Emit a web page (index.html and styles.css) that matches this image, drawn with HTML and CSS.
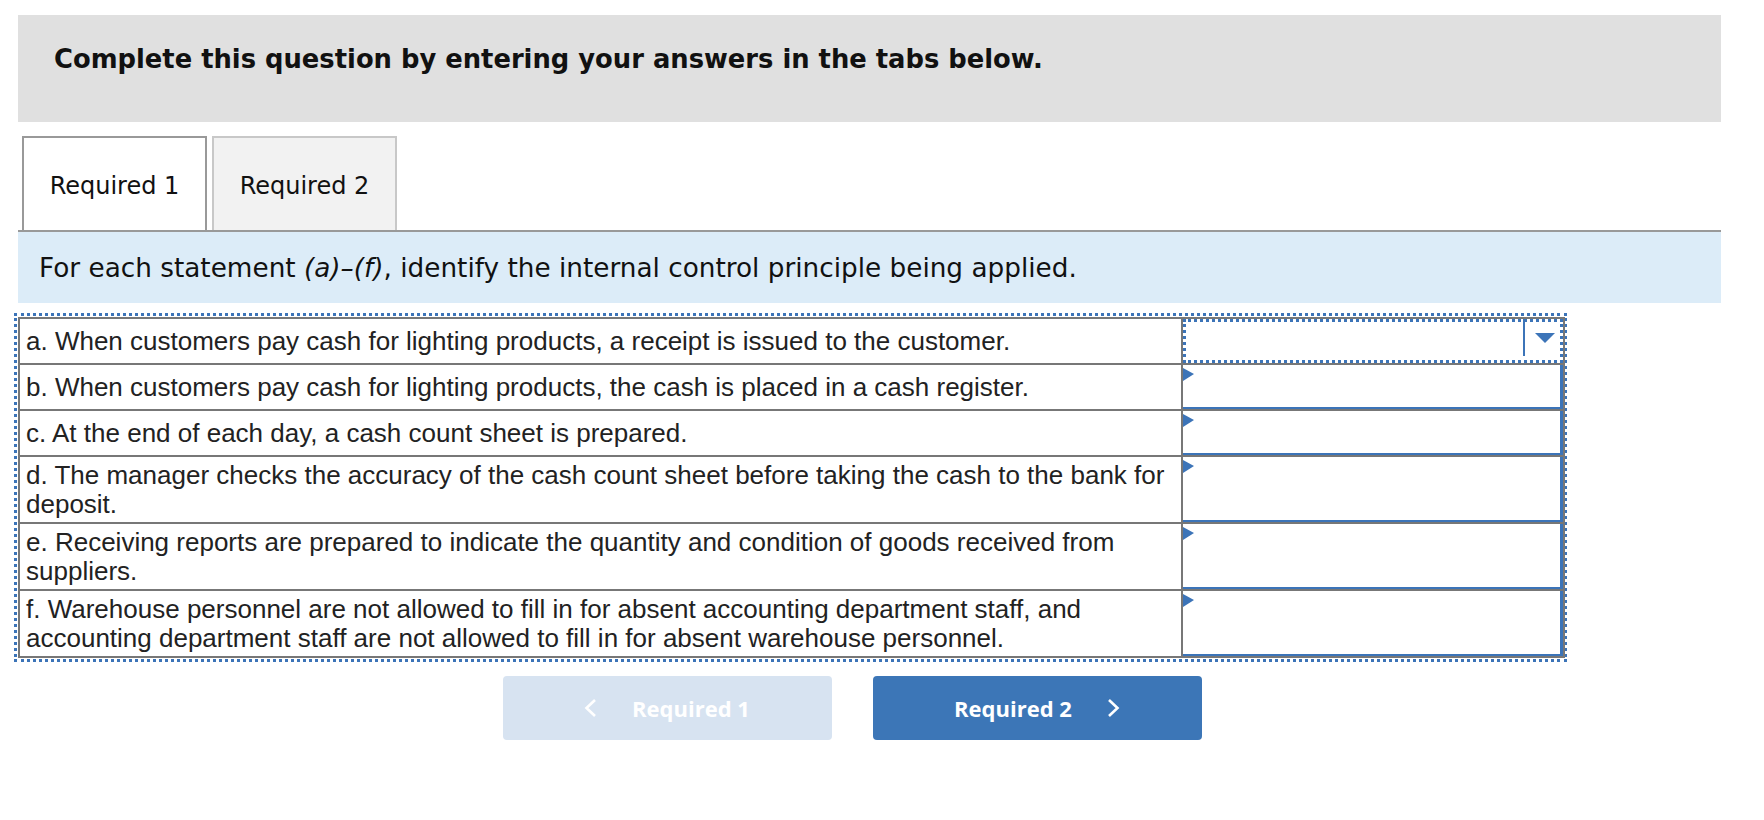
FILE: index.html
```html
<!DOCTYPE html>
<html lang="en">
<head>
    <meta charset="UTF-8">
    <meta name="viewport" content="width=device-width, initial-scale=1.0">
    <title>Required 1</title>
    <link rel="stylesheet" href="styles.css">
</head>
<body>
    <div class="page">
        <div class="prompt">Complete this question by entering your answers in the tabs below.</div>
        <div class="tabs">
            <div class="tab active">Required 1</div>
            <div class="tab">Required 2</div>
        </div>
        <div class="instructions">For each statement <i>(a)–(f)</i>, identify the internal control principle being applied.</div>
        <div class="answers">
            <table>
                <colgroup>
                    <col class="statement-col">
                    <col class="choice-col">
                </colgroup>
                <tr>
                    <td class="statement">a. When customers pay cash for lighting products, a receipt is issued to the customer.</td>
                    <td class="choice open"><div class="select"></div></td>
                </tr>
                <tr>
                    <td class="statement">b. When customers pay cash for lighting products, the cash is placed in a cash register.</td>
                    <td class="choice"></td>
                </tr>
                <tr>
                    <td class="statement">c. At the end of each day, a cash count sheet is prepared.</td>
                    <td class="choice"></td>
                </tr>
                <tr>
                    <td class="statement">d. The manager checks the accuracy of the cash count sheet before taking the cash to the bank for deposit.</td>
                    <td class="choice"></td>
                </tr>
                <tr>
                    <td class="statement">e. Receiving reports are prepared to indicate the quantity and condition of goods received from suppliers.</td>
                    <td class="choice"></td>
                </tr>
                <tr>
                    <td class="statement">f. Warehouse personnel are not allowed to fill in for absent accounting department staff, and accounting department staff are not allowed to fill in for absent warehouse personnel.</td>
                    <td class="choice"></td>
                </tr>
            </table>
        </div>
        <div class="nav">
            <button type="button" class="nav-btn prev">
                <svg width="13" height="20" viewBox="0 0 13 20"><polyline points="11,2 2.5,10 11,18" fill="none" stroke="#fff" stroke-width="2.6"/></svg>
                Required 1
            </button>
            <button type="button" class="nav-btn next">
                Required 2
                <svg width="13" height="20" viewBox="0 0 13 20"><polyline points="2,2 10.5,10 2,18" fill="none" stroke="#fff" stroke-width="2.6"/></svg>
            </button>
        </div>
    </div>
</body>
</html>
```

FILE: styles.css
```css
body {
    margin: 0;
    background: #fff;
    color: #111;
    font-family: "DejaVu Sans", Verdana, sans-serif;
}
.page {
    padding: 15px 43px 0 18px;
}
.prompt {
    background: #e0e0e0;
    height: 107px;
    box-sizing: border-box;
    padding: 29px 36px 0 36px;
    font-size: 25.8px;
    font-weight: bold;
    line-height: 30px;
}
.tabs {
    display: flex;
    gap: 5px;
    margin-top: 14px;
    padding-left: 4px;
    border-bottom: 2px solid #999;
}
.tab {
    width: 185px;
    height: 94px;
    box-sizing: border-box;
    padding-top: 4px;
    display: flex;
    align-items: center;
    justify-content: center;
    font-size: 24px;
    background: #f2f2f2;
    border: 2px solid #c8c8c8;
    border-bottom: none;
}
.tab.active {
    background: #fff;
    border-color: #999;
}
.instructions {
    background: #dcecf8;
    height: 71px;
    box-sizing: border-box;
    padding: 2px 21px 0 21px;
    font-size: 26.3px;
    line-height: 69px;
}
.answers {
    width: 1545px;
    margin: 10px 0 0 -4px;
    padding: 1px;
    border: 3px dotted #3c74b8;
}
.answers table {
    width: 100%;
    border-collapse: collapse;
    table-layout: fixed;
    font-family: "Liberation Sans", Arial, sans-serif;
    font-size: 26px;
    line-height: 29px;
    color: #222;
}
.statement-col {
    width: 1163px;
}
.choice-col {
    width: 382px;
}
.answers td {
    border: 2px solid #777;
    padding: 4px 6px 3px 6px;
    vertical-align: middle;
}
.answers td.choice {
    padding: 0;
    height: 44px;
    position: relative;
    box-shadow: inset -3px -2px 0 #3c74b8;
}
.answers td.choice::before {
    content: "";
    position: absolute;
    top: 3px;
    left: 0;
    border-left: 11px solid #3c74b8;
    border-top: 6px solid transparent;
    border-bottom: 7px solid transparent;
}
.answers td.choice.open {
    box-shadow: none;
}
.answers td.choice.open::before {
    display: none;
}
.select {
    height: 44px;
    position: relative;
    outline: 3px dotted #3c74b8;
    outline-offset: -3px;
}
.select::before {
    content: "";
    position: absolute;
    right: 38px;
    top: 0;
    bottom: 7px;
    width: 2px;
    background: #3c74b8;
}
.select::after {
    content: "";
    position: absolute;
    right: 8px;
    top: 14px;
    border-top: 10px solid #3c74b8;
    border-left: 10px solid transparent;
    border-right: 10px solid transparent;
}
.nav {
    display: flex;
    justify-content: center;
    gap: 41px;
    margin-top: 14px;
    padding-right: 35px;
}
.nav-btn {
    width: 329px;
    height: 64px;
    border: none;
    border-radius: 4px;
    display: flex;
    align-items: center;
    justify-content: center;
    gap: 35px;
    color: #fff;
    font-family: "Open Sans", sans-serif;
    font-size: 22px;
    font-weight: bold;
    cursor: pointer;
}
.nav-btn.prev {
    background: #d7e3f1;
}
.nav-btn.next {
    background: #3c76b7;
}
```
